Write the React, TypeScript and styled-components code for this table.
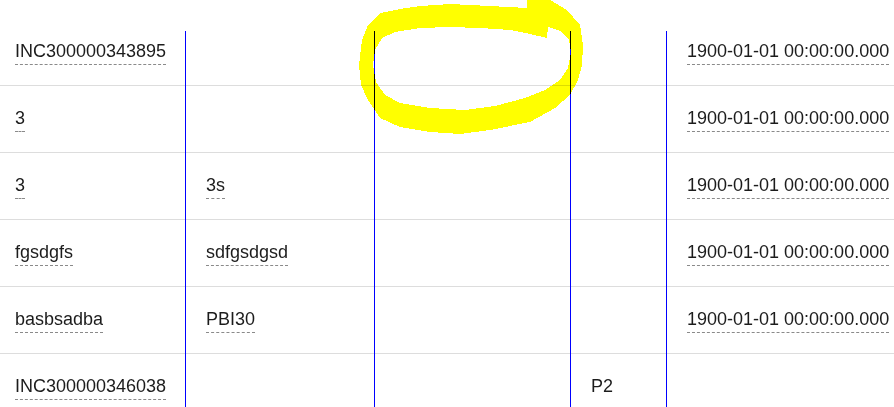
import React from "react";
import styled, { createGlobalStyle } from "styled-components";

const GlobalStyle = createGlobalStyle`
  html, body {
    margin: 0;
    padding: 0;
    background: #ffffff;
    overflow: hidden;
  }
  body {
    font-family: "Liberation Sans", Arial, sans-serif;
  }
`;

const Page = styled.div`
  position: relative;
  width: 894px;
  height: 407px;
  overflow: hidden;
  padding-top: 19px;
  box-sizing: border-box;
`;

const Table = styled.div`
  display: flex;
  flex-direction: column;
`;

const Row = styled.div`
  display: grid;
  grid-template-columns: 191px 189px 196px 96px 1fr;
  height: 67px;
  box-sizing: border-box;
  border-bottom: 1px solid #dddddd;
`;

const Cell = styled.div`
  padding: 22px 0 0 15px;
  box-sizing: border-box;
  min-width: 0;
  white-space: nowrap;
`;

const Value = styled.span<{ $plain?: boolean }>`
  display: inline-block;
  font-size: 18px;
  line-height: normal;
  color: #1c1c1c;
  padding-bottom: 2px;
  border-bottom: 1px dashed ${(p) => (p.$plain ? "transparent" : "#8a8a8a")};
`;

const Guide = styled.div<{ $left: number }>`
  position: absolute;
  top: 31px;
  bottom: 0;
  left: ${(p) => p.$left}px;
  width: 1px;
  background: #0000ff;
`;

const Highlight = styled.svg`
  position: absolute;
  left: 0;
  top: 0;
  width: 894px;
  height: 407px;
  pointer-events: none;
  mix-blend-mode: multiply;
`;

type Entry = { text: string; plain?: boolean } | null;

const rows: Entry[][] = [
  [{ text: "INC300000343895" }, null, null, null, { text: "1900-01-01 00:00:00.000" }],
  [{ text: "3" }, null, null, null, { text: "1900-01-01 00:00:00.000" }],
  [{ text: "3" }, { text: "3s" }, null, null, { text: "1900-01-01 00:00:00.000" }],
  [{ text: "fgsdgfs" }, { text: "sdfgsdgsd" }, null, null, { text: "1900-01-01 00:00:00.000" }],
  [{ text: "basbsadba" }, { text: "PBI30" }, null, null, { text: "1900-01-01 00:00:00.000" }],
  [{ text: "INC300000346038" }, null, null, { text: "P2", plain: true }, null],
];

const guides = [185, 374, 570, 666];

const outer: [number, number][] = [
  [362, 40], [368, 25], [380, 13], [400, 9], [420, 6], [450, 4], [490, 6], [527, 8],
  [527, 0], [550, 0], [567, 10], [580, 25], [583, 45], [582, 65], [578, 80], [570, 95],
  [555, 108], [530, 122], [490, 130], [460, 134], [430, 132], [400, 127], [380, 118],
  [368, 100], [361, 85], [359, 65],
];

const inner: [number, number][] = [
  [375, 50], [382, 38], [395, 32], [420, 28], [450, 27], [480, 28], [510, 30], [530, 34],
  [547, 38], [548, 27], [560, 31], [569, 40], [571, 52], [568, 68], [560, 80], [545, 90],
  [525, 98], [495, 106], [465, 110], [430, 108], [400, 103], [385, 95], [376, 82], [373, 65],
];

const toPath = (pts: [number, number][]) =>
  "M" + pts.map(([x, y]) => `${x} ${y}`).join(" L") + " Z";

export default function App() {
  return (
    <>
      <GlobalStyle />
      <Page>
        <Table>
          {rows.map((row, i) => (
            <Row key={i}>
              {row.map((entry, j) => (
                <Cell key={j}>
                  {entry && <Value $plain={entry.plain}>{entry.text}</Value>}
                </Cell>
              ))}
            </Row>
          ))}
        </Table>
        {guides.map((x) => (
          <Guide key={x} $left={x} />
        ))}
        <Highlight viewBox="0 0 894 407" shapeRendering="crispEdges">
          <path d={toPath(outer) + " " + toPath(inner)} fill="#ffff00" fillRule="evenodd" />
        </Highlight>
      </Page>
    </>
  );
}
